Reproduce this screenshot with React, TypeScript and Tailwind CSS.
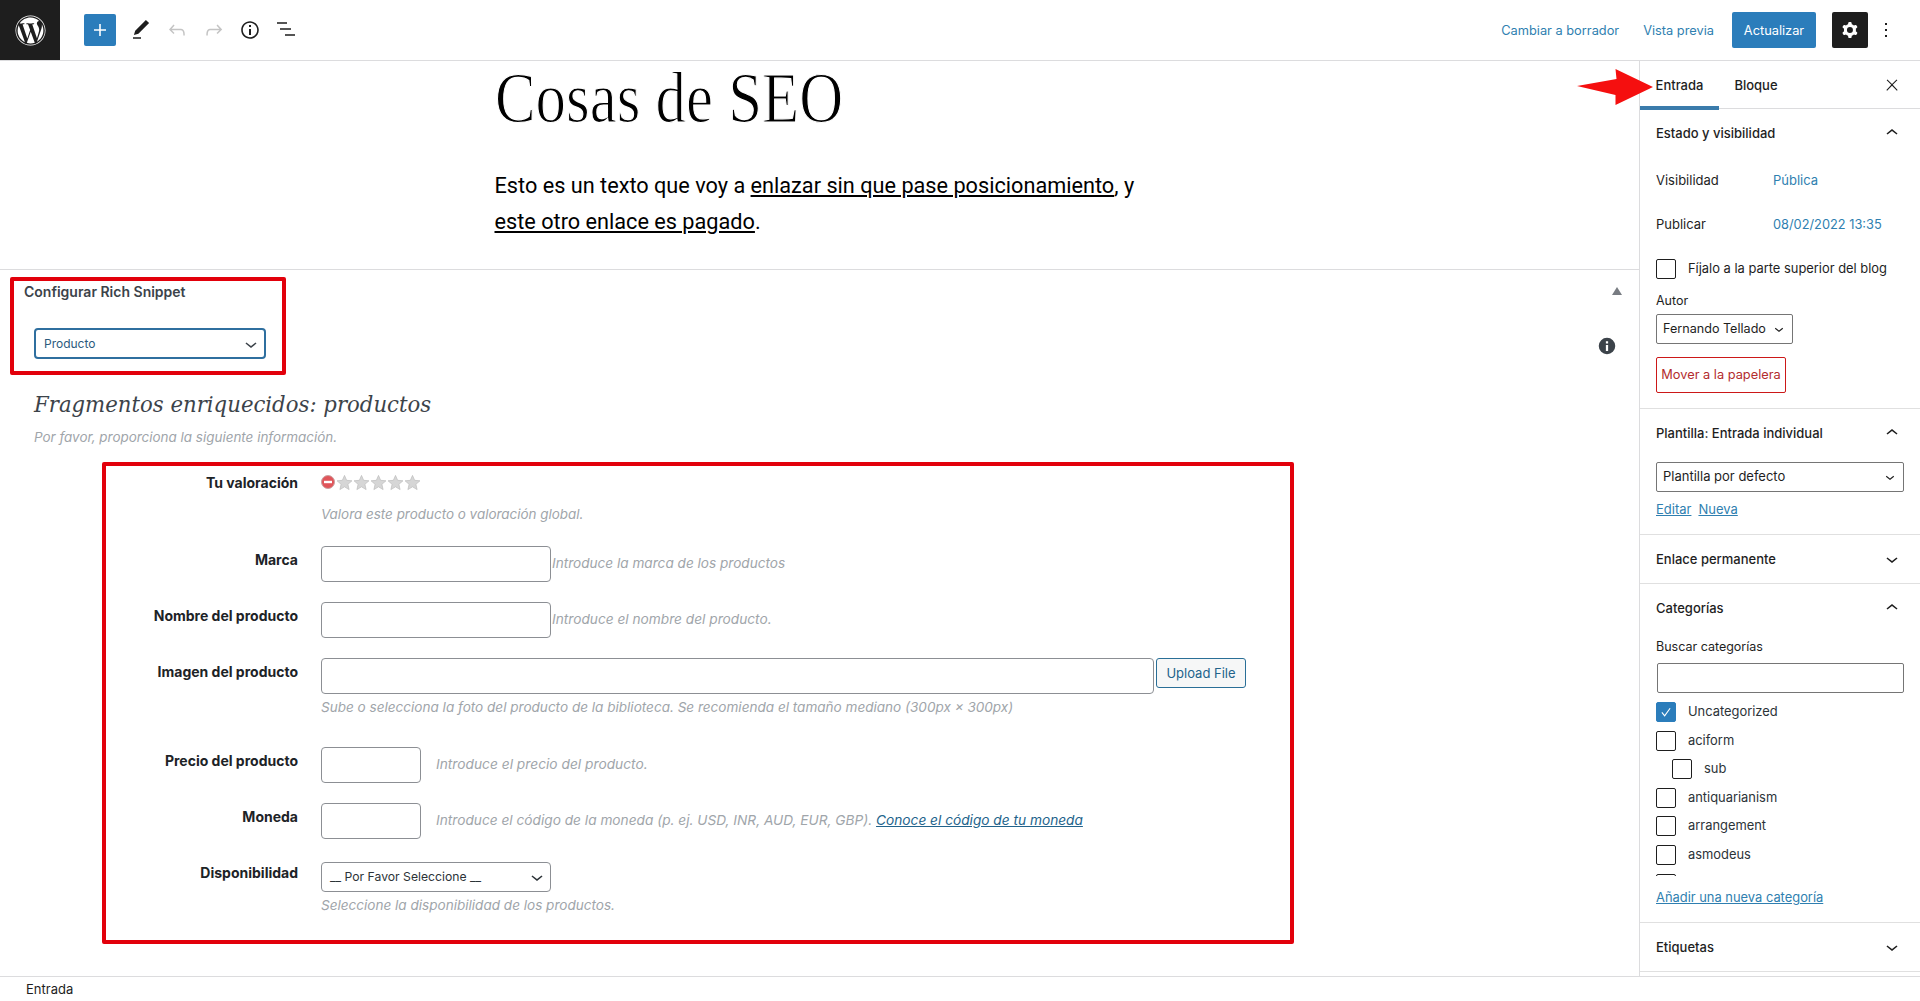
import { FaWordpress } from "react-icons/fa"

const blue = "text-[#2f7fb0]"

const Icon = ({ d, className }: { d: string; className?: string }) => (
  <svg viewBox="0 0 24 24" className={`shrink-0 ${className}`} fill="currentColor">
    <path d={d} fillRule="evenodd" />
  </svg>
)

const icons = {
  plus: "M18 11.2h-5.2V6h-1.6v5.2H6v1.6h5.2V18h1.6v-5.2H18z",
  pencil: "M20.1 5.1L16.9 2 6.2 12.7l-1.3 4.4 4.5-1.3L20.1 5.1zM4 20.8h8v-1.5H4v1.5z",
  undo: "M18.3 11.7c-.6-.6-1.4-.9-2.3-.9H6.7l2.9-3.3-1.1-1-4.5 5L8.5 16l1-1-2.7-2.7H16c.5 0 .9.2 1.3.5 1 1 1 3.4 1 4.5v.3h1.5v-.2c0-1.5 0-4.3-1.5-5.7z",
  redo: "M15.6 6.5l-1.1 1 2.9 3.3H8c-.9 0-1.7.3-2.3.9-1.4 1.5-1.4 4.2-1.4 5.6v.2h1.5v-.3c0-1.1 0-3.5 1-4.5.3-.3.7-.5 1.3-.5h9.2L14.5 15l1.1 1.1 4.6-4.6-4.6-5z",
  info: "M12 3.2c-4.8 0-8.8 3.9-8.8 8.8 0 4.8 3.9 8.8 8.8 8.8 4.8 0 8.8-3.9 8.8-8.8 0-4.8-4-8.8-8.8-8.8zm0 16c-4 0-7.2-3.3-7.2-7.2C4.8 8 8 4.8 12 4.8s7.2 3.3 7.2 7.2c0 4-3.2 7.2-7.2 7.2zM11 17h2v-6h-2v6zm0-8h2V7h-2v2z",
  list: "M4 4.300h10v1.500H4zM7 10.300h11v1.500H7zM12 16.300h10v1.500H12z",
  cog: "M10.289 4.836A1 1 0 0111.275 4h1.306a1 1 0 01.987.836l.244 1.466c.787.26 1.503.679 2.108 1.218l1.393-.522a1 1 0 011.216.437l.653 1.13a1 1 0 01-.23 1.273l-1.148.944a6.025 6.025 0 010 2.435l1.149.946a1 1 0 01.23 1.272l-.653 1.13a1 1 0 01-1.216.437l-1.394-.522c-.605.54-1.32.958-2.108 1.218l-.244 1.466a1 1 0 01-.987.836h-1.306a1 1 0 01-.986-.836l-.244-1.466a5.995 5.995 0 01-2.108-1.218l-1.394.522a1 1 0 01-1.217-.436l-.653-1.131a1 1 0 01.23-1.272l1.149-.946a6.026 6.026 0 010-2.435l-1.148-.944a1 1 0 01-.23-1.272l.653-1.131a1 1 0 011.217-.437l1.393.522a5.994 5.994 0 012.108-1.218l.244-1.466zM14.929 12a3 3 0 11-6 0 3 3 0 016 0z",
  more: "M13 19h-2v-2h2v2zm0-6h-2v-2h2v2zm0-6h-2V5h2v2z",
  close: "M13 11.8l6.1-6.3-1-1-6.1 6.2-6.1-6.2-1 1 6.1 6.3-6.5 6.7 1 1 6.5-6.6 6.5 6.6 1-1z",
  up: "M6.5 12.4L12 8l5.500 4.400-.9 1.200L12 10l-4.500 3.600-1-1.200z",
  down: "M17.5 11.6L12 16l-5.5-4.4.9-1.2L12 14l4.5-3.6 1 1.2z",
}

const PanelTitle = ({ title, open }: { title: string; open?: boolean }) => (
  <div className="flex h-12 items-center justify-between pl-4 pr-[16px] text-[13px] font-medium text-[#1e1e1e]">
    <span className="pt-[2px]">{title}</span>
    <Icon d={open ? icons.up : icons.down} className="size-6" />
  </div>
)

const Check = ({ checked }: { checked?: boolean }) => (
  <span
    className={`flex size-5 shrink-0 items-center justify-center rounded-[2px] border ${
      checked ? "border-[#2b7dbb] bg-[#2b7dbb]" : "border-[#1e1e1e] bg-white"
    }`}
  >
    {checked && (
      <svg viewBox="0 0 24 24" className="size-5 text-white" fill="none" stroke="currentColor" strokeWidth={1.5}>
        <path d="M6.5 12.5l3.700 4.500 7.300-10" />
      </svg>
    )}
  </span>
)

const categories = [
  { name: "Uncategorized", checked: true },
  { name: "aciform" },
  { name: "sub", child: true },
  { name: "antiquarianism" },
  { name: "arrangement" },
  { name: "asmodeus" },
  { name: "asmodeus2" },
]

const Sidebar = () => (
  <aside className="relative w-[281px] shrink-0 overflow-hidden border-l border-[#dcdcde] text-[13px] text-[#1e1e1e]">
    <div className="relative flex h-12 items-center border-b border-[#dcdcde]">
      <div className="relative flex h-12 w-[79px] items-center justify-center pt-[2px] font-medium">
        Entrada
        <span className="absolute inset-x-0 bottom-[-1px] h-1 bg-[#3a7bab]" />
      </div>
      <div className="flex h-12 w-[74px] items-center justify-center pt-[2px] font-medium">Bloque</div>
      <Icon d={icons.close} className="ml-auto mr-[19px] size-[18px]" />
    </div>

    <section className="h-[300px] border-b border-[#e0e0e0] pl-4 pr-4">
      <div className="-mx-4">
        <PanelTitle title="Estado y visibilidad" open />
      </div>
      <div className="flex h-11 items-center pt-1">
        <span className="w-[117px]">Visibilidad</span>
        <span className={blue}>Pública</span>
      </div>
      <div className="mt-[2px] flex h-11 items-center">
        <span className="w-[117px]">Publicar</span>
        <span className={`text-[12.8px] ${blue}`}>08/02/2022 13:35</span>
      </div>
      <div className="mt-[12px] flex items-center gap-[12px]">
        <Check />
        <span className="text-[12.9px]">Fíjalo a la parte superior del blog</span>
      </div>
      <div className="mt-[14px] text-[12.5px] leading-4">Autor</div>
      <div className="mt-[5px] flex h-[30px] w-[137px] items-center justify-between rounded-[2px] border border-[#757575] pl-[6px] pr-1">
        <span className="whitespace-nowrap text-[12.6px]">Fernando Tellado</span>
        <Icon d={icons.down} className="size-[18px]" />
      </div>
      <div className="mt-[13px] flex h-[36px] w-[130px] items-center justify-center rounded-[2px] border border-[#cc1818] text-[12.8px] text-[#b32d2e]">
        Mover a la papelera
      </div>
    </section>

    <section className="h-[126px] border-b border-[#e0e0e0] px-4">
      <div className="-mx-4">
        <PanelTitle title="Plantilla: Entrada individual" open />
      </div>
      <div className="mt-[5px] flex h-[30px] items-center justify-between rounded-[2px] border border-[#757575] pl-[6px] pr-1">
        <span>Plantilla por defecto</span>
        <Icon d={icons.down} className="size-[18px]" />
      </div>
      <div className={`mt-[8px] flex gap-[7px] underline ${blue}`}>
        <span>Editar</span>
        <span>Nueva</span>
      </div>
    </section>

    <section className="h-[49px] border-b border-[#e0e0e0]">
      <PanelTitle title="Enlace permanente" />
    </section>

    <section className="h-[339px] border-b border-[#e0e0e0] px-4">
      <div className="-mx-4">
        <PanelTitle title="Categorías" open />
      </div>
      <div className="mt-[7px] text-[12.5px] leading-4">Buscar categorías</div>
      <div className="ml-px mt-[8px] h-[30px] rounded-[2px] border border-[#757575]" />
      <div className="mt-[9px] flex h-[174px] flex-col overflow-hidden">
        {categories.map((c) => (
          <div key={c.name} className={`flex h-[28.6px] shrink-0 gap-[12px] ${c.child ? "pl-4" : ""}`}>
            <Check checked={c.checked} />
            <span className="text-[12.9px] leading-5 text-[#2c3338]">{c.name}</span>
          </div>
        ))}
      </div>
      <div className={`mt-[12px] text-[12.9px] underline ${blue}`}>Añadir una nueva categoría</div>
    </section>

    <section className="h-[49px] border-b border-[#e0e0e0]">
      <PanelTitle title="Etiquetas" />
    </section>
  </aside>
)

const Help = ({ children, className = "" }: { children: React.ReactNode; className?: string }) => (
  <p className={`whitespace-nowrap italic text-[#a0a5aa] ${className}`}>{children}</p>
)

const Box = ({ className = "" }: { className?: string }) => (
  <div className={`h-9 shrink-0 rounded-[4px] border border-[#8c8f94] bg-white ${className}`} />
)

const Row = ({
  label,
  height,
  top,
  children,
}: {
  label: string
  height: string
  top: string
  children: React.ReactNode
}) => (
  <div className={`flex gap-[23px] ${height}`}>
    <div className={`w-[192px] shrink-0 text-right text-sm font-bold leading-5 text-[#1d2327] ${top}`}>{label}</div>
    <div className="min-w-0 flex-1">{children}</div>
  </div>
)

const Rating = () => (
  <div className="flex h-[18px] items-center">
    <svg viewBox="0 0 14 14" className="mr-px size-[14px]">
      <circle cx="7" cy="7" r="6.5" fill="#e0555a" stroke="#c9a0a0" />
      <rect x="3" y="5.8" width="8" height="2.4" fill="#fff" />
    </svg>
    {[0, 1, 2, 3, 4].map((i) => (
      <svg key={i} viewBox="0 0 24 24" className="size-[17px]">
        <path
          d="M12 2l3 6.900 7.500.7-5.700 5 1.700 7.400L12 18.100 5.500 22l1.700-7.400-5.700-5 7.500-.7z"
          fill="#d6d6d6"
          stroke="#bcbcbc"
        />
      </svg>
    ))}
  </div>
)

const Metabox = () => (
  <div className="border-t border-[#dcdcde] text-[#1d2327]">
    <div className="relative">
      <div className="ml-[10px] mt-[7px] h-[98px] w-[276px] rounded-[2px] border-4 border-[#e2000b] pl-[10px]">
        <div className="text-sm font-semibold leading-[22px] text-[#3c434a]">Configurar Rich Snippet</div>
        <div className="ml-[10px] mt-[25px] flex h-[31px] w-[232px] items-center justify-between rounded-[4px] border-2 border-[#2f6f9f] pl-2 pr-px text-xs text-[#2c5a7d]">
          <span>Producto</span>
          <Icon d={icons.down} className="size-6 text-[#3c434a]" />
        </div>
      </div>
      <svg viewBox="0 0 10 8" className="absolute left-[1612px] top-[10px] h-2 w-[10px] text-[#787c82]" fill="currentColor">
        <path d="M5 0l5 8H0z" />
      </svg>
      <svg viewBox="0 0 24 24" className="absolute left-[1598px] top-[60px] size-[18px] text-[#3c434a]" fill="currentColor">
        <path
          fillRule="evenodd"
          d="M12 1a11 11 0 100 22 11 11 0 000-22zm-1.500 4.500h3v3h-3zm0 5h3v8h-3z"
        />
      </svg>
    </div>

    <h2 className="ml-[34px] mt-[13px] origin-left scale-x-[0.923] whitespace-nowrap font-['DejaVu_Serif'] text-[23px] italic leading-[32px] text-[#3c434a]">
      Fragmentos enriquecidos: productos
    </h2>
    <Help className="ml-[34px] mt-[7px] text-[13.45px] leading-5">Por favor, proporciona la siguiente información.</Help>

    <div className="ml-[102px] mt-[15px] h-[482px] w-[1192px] rounded-[2px] border-4 border-[#e2000b] pt-[7px]">
      <Row label="Tu valoración" height="h-[73px]" top="pt-0">
        <Rating />
        <Help className="mt-[13px] text-[13.45px] leading-5">Valora este producto o valoración global.</Help>
      </Row>
      <Row label="Marca" height="h-14" top="pt-[4px]">
        <div className="flex items-center">
          <Box className="w-[230px]" />
          <Help className="ml-px pb-[2px] text-[13.6px]">Introduce la marca de los productos</Help>
        </div>
      </Row>
      <Row label="Nombre del producto" height="h-14" top="pt-[4px]">
        <div className="flex items-center">
          <Box className="w-[230px]" />
          <Help className="ml-px pb-[2px] text-[13.7px]">Introduce el nombre del producto.</Help>
        </div>
      </Row>
      <Row label="Imagen del producto" height="h-[89px]" top="pt-[4px]">
        <div className="flex items-start gap-[2px]">
          <Box className="w-[833px]" />
          <div className="flex h-[30px] w-[90px] items-center justify-center rounded-[3px] border border-[#2a6f97] bg-[#f6f7f7] pt-[2px] text-[13px] text-[#22638b]">
            Upload File
          </div>
        </div>
        <Help className="mt-[3px] text-[13.55px] leading-5">
          Sube o selecciona la foto del producto de la biblioteca. Se recomienda el tamaño mediano (300px × 300px)
        </Help>
      </Row>
      <Row label="Precio del producto" height="h-14" top="pt-[4px]">
        <div className="flex items-center gap-[15px]">
          <Box className="w-[100px]" />
          <Help className="pb-[2px] text-[13.75px]">Introduce el precio del producto.</Help>
        </div>
      </Row>
      <Row label="Moneda" height="h-[59px]" top="pt-[4px]">
        <div className="flex items-center gap-[15px]">
          <Box className="w-[100px]" />
          <Help className="pb-[2px] text-[13.7px]">
            Introduce el código de la moneda (p. ej. USD, INR, AUD, EUR, GBP).{" "}
            <span className="text-[#22638b] underline">Conoce el código de tu moneda</span>
          </Help>
        </div>
      </Row>
      <Row label="Disponibilidad" height="h-[72px]" top="pt-px">
        <div className="flex h-[30px] w-[230px] items-center justify-between rounded-[4px] border border-[#8c8f94] pl-2 pr-px text-[12.2px] text-[#2c3338]">
          <span>__ Por Favor Seleccione __</span>
          <Icon d={icons.down} className="size-6" />
        </div>
        <Help className="mt-[3px] text-[13.55px] leading-5">Seleccione la disponibilidad de los productos.</Help>
      </Row>
    </div>
  </div>
)

export default function App() {
  return (
    <div className="relative flex h-screen flex-col overflow-hidden bg-white font-['Inter',sans-serif]">
      <header className="flex h-[61px] shrink-0 items-center border-b border-[#dcdcde] pr-[22px]">
        <div className="flex size-[60px] shrink-0 items-center justify-center bg-[#1e1e1e] text-white">
          <FaWordpress className="size-[31px]" />
        </div>
        <div className="ml-6 flex size-8 items-center justify-center rounded-[2px] bg-[#2b7dbb] text-white">
          <Icon d={icons.plus} className="size-6" />
        </div>
        <Icon d={icons.pencil} className="ml-[13px] size-6 text-[#1e1e1e]" />
        <Icon d={icons.undo} className="ml-3 size-6 text-[#c4c4c4]" />
        <Icon d={icons.redo} className="ml-[13px] size-6 text-[#c4c4c4]" />
        <Icon d={icons.info} className="ml-3 size-6 text-[#1e1e1e]" />
        <Icon d={icons.list} className="ml-[11px] size-6 text-[#1e1e1e]" />

        <div className="ml-auto flex items-center text-[12.8px]">
          <span className={`pt-[2px] ${blue}`}>Cambiar a borrador</span>
          <span className={`ml-6 pt-[2px] ${blue}`}>Vista previa</span>
          <span className="ml-[18px] flex h-9 w-[84px] items-center justify-center rounded-[2px] bg-[#2b7dbb] pt-[2px] text-white">
            Actualizar
          </span>
          <span className="ml-4 flex size-9 items-center justify-center rounded-[2px] bg-[#1e1e1e] text-white">
            <Icon d={icons.cog} className="size-6" />
          </span>
          <Icon d={icons.more} className="ml-1.5 size-6 text-[#1e1e1e]" />
        </div>
      </header>

      <div className="flex min-h-0 flex-1">
        <main className="min-w-0 flex-1 overflow-hidden">
          <div className="h-[208px]">
            <div className="mx-auto w-[650px] text-black">
              <h1 className="h-[107px] origin-left -translate-y-px scale-x-[0.845] whitespace-nowrap font-['Liberation_Serif'] text-[72px] font-light leading-[76px] [-webkit-text-stroke:1.2px_white]">
                Cosas de SEO
              </h1>
              <p className="font-['Roboto'] text-[21.7px] leading-9">
                Esto es un texto que voy a <span className="underline">enlazar sin que pase posicionamiento</span>, y{" "}
                <span className="underline">este otro enlace es pagado</span>.
              </p>
            </div>
          </div>
          <Metabox />
        </main>
        <Sidebar />
      </div>

      <footer className="h-[25px] shrink-0 border-t border-[#dcdcde] pl-[26px] text-[13px] leading-6 text-[#1e1e1e]">
        Entrada
      </footer>

      <svg viewBox="0 0 76 38" className="absolute left-[1577px] top-[68px] h-[38px] w-[77px] text-[#f50f0f]" fill="currentColor" preserveAspectRatio="none">
        <path d="M0 18L39 11 38 1 75 19 38 37 38 27z" />
      </svg>
    </div>
  )
}
